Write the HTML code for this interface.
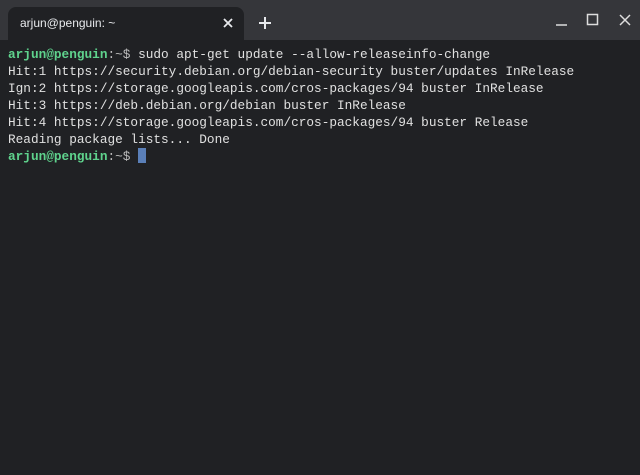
<!DOCTYPE html>
<html><head><style>
html,body{margin:0;padding:0;width:640px;height:475px;overflow:hidden;background:#202124;}
.bar{position:absolute;left:0;top:0;width:640px;height:40px;background:#35363a;}
.tab{position:absolute;left:8px;top:7px;width:236px;height:33px;background:#202124;border-radius:8px 8px 0 0;}
.tab span{position:absolute;left:12px;top:9px;font:12px "Liberation Sans",sans-serif;color:#e8eaed;}
.term{position:absolute;left:8px;top:47px;font:12.75px/16.9px "Liberation Mono",monospace;color:#e0e0e0;white-space:pre;}
.p{color:#5fd38d;font-weight:bold}
.c{color:#bdbdbd}
.cur{display:inline-block;width:8px;height:15px;background:#5a7fb8;vertical-align:-3px;}
svg{position:absolute}
</style></head><body>
<div class="bar"></div>
<div class="tab"><span>arjun@penguin: ~</span></div>
<svg style="left:222px;top:17px" width="12" height="12"><path d="M2 2L10 10M10 2L2 10" stroke="#e8eaed" stroke-width="1.8"/></svg>
<svg style="left:258px;top:16px" width="14" height="14"><path d="M7 1V13M1 7H13" stroke="#e8eaed" stroke-width="2"/></svg>
<svg style="left:555px;top:14px" width="14" height="14"><path d="M1 11H12" stroke="#ddd" stroke-width="1.5"/></svg>
<svg style="left:586px;top:13px" width="14" height="14"><rect x="1.5" y="1.5" width="10" height="10" fill="none" stroke="#ddd" stroke-width="1.5"/></svg>
<svg style="left:618px;top:13px" width="14" height="14"><path d="M2 2L12 12M12 2L2 12" stroke="#ddd" stroke-width="1.5"/></svg>
<div class="term"><span class="p">arjun@penguin</span><span class="c">:~$</span> sudo apt-get update --allow-releaseinfo-change
Hit:1 https://security.debian.org/debian-security buster/updates InRelease
Ign:2 https://storage.googleapis.com/cros-packages/94 buster InRelease
Hit:3 https://deb.debian.org/debian buster InRelease
Hit:4 https://storage.googleapis.com/cros-packages/94 buster Release
Reading package lists... Done
<span class="p">arjun@penguin</span><span class="c">:~$</span> <span class="cur"></span></div>
</body></html>
